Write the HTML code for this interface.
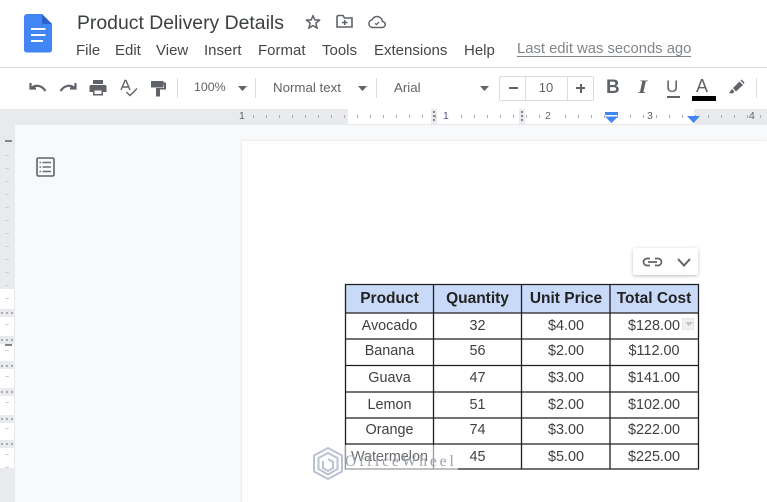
<!DOCTYPE html>
<html><head><meta charset="utf-8">
<style>
html,body{margin:0;padding:0;background:#fff}
#p{position:relative;width:767px;height:502px;overflow:hidden;background:#fff;font-family:"Liberation Sans",sans-serif;color:#3c4043;filter:blur(.35px)}
.a{position:absolute;white-space:nowrap}
.m{top:42px;font-size:15px;line-height:17px;color:#444746}
.t{top:80px;font-size:13.300px;line-height:15px;color:#5f6368}
.sep{position:absolute;top:78px;width:1px;height:20px;background:#dadce0}
.c{position:absolute;text-align:center;font-size:14.400px;line-height:16px;color:#3f3f3f;white-space:nowrap}
.h{font-weight:bold;font-size:15.500px;color:#222}
.n{position:absolute;top:111px;font-size:10.500px;line-height:11px;color:#5f6368}
.d{position:absolute;left:1px;width:12px;height:2px;background:repeating-linear-gradient(90deg,#a8abaf 0 2px,transparent 2px 5px)}
.g{position:absolute;left:0;width:14px;height:8px;background:#e8eaed}
svg{position:absolute;overflow:visible}
</style></head><body><div id="p">

<svg style="left:24px;top:14px" width="28" height="39" viewBox="0 0 28 39">
<path d="M3 0H18L28 10V36a2.500 2.500 0 0 1-2.500 2.500H2.500A2.500 2.500 0 0 1 0 36V3A3 3 0 0 1 3 0Z" fill="#4285f4"/>
<path d="M18 0L28 10H20a2 2 0 0 1-2-2Z" fill="#2a62c9"/>
<path d="M7 15H21.500M7 21H21.500M7 27H19" stroke="#fff" stroke-width="2" fill="none"/>
</svg>
<div class="a" style="left:77px;top:12px;font-size:19.400px;line-height:23px;color:#3c4043">Product Delivery Details</div>
<svg style="left:305px;top:14px" width="16" height="16" viewBox="0 0 16 16"><path d="M8 1.500L9.800 6H14.700L10.800 9.200L12.200 14.300L8 11.500L3.800 14.300L5.200 9.200L1.300 6H6.200Z" fill="none" stroke="#5f6368" stroke-width="1.500" stroke-linejoin="round"/></svg>
<svg style="left:336px;top:14px" width="18" height="15" viewBox="0 0 18 15"><path d="M1 2.500V13H16V4H8.500L7 1.500H2Z" fill="none" stroke="#5f6368" stroke-width="1.600"/><path d="M6 8.500H11.500M8.700 6V11" stroke="#5f6368" stroke-width="1.500"/></svg>
<svg style="left:368px;top:15px" width="18" height="14" viewBox="0 0 18 14"><path d="M4.500 12.500H14a3 3 0 0 0 .5-6A5.500 5.500 0 0 0 4 4.800 3.900 3.900 0 0 0 4.500 12.500Z" fill="none" stroke="#5f6368" stroke-width="1.500"/><path d="M7 8.500L8.500 9.500L11 7" fill="none" stroke="#5f6368" stroke-width="1.300"/></svg>

<div class="a m" style="left:76px">File</div>
<div class="a m" style="left:115px">Edit</div>
<div class="a m" style="left:156px">View</div>
<div class="a m" style="left:204px">Insert</div>
<div class="a m" style="left:258px">Format</div>
<div class="a m" style="left:322px">Tools</div>
<div class="a m" style="left:374px">Extensions</div>
<div class="a m" style="left:464px">Help</div>
<div class="a" style="left:517px;top:42px;font-size:14.800px;line-height:14px;color:#80868b;border-bottom:1px solid #80868b">Last edit was seconds ago</div>

<div class="a" style="left:0;top:67px;width:767px;height:1px;background:#dadce0"></div>

<svg style="left:29px;top:82px" width="18" height="12" viewBox="0 0 18 12"><path d="M1.500 1V6.500H7M2 6.500C6 2.500 12 2.500 16.500 9" fill="none" stroke="#5f6368" stroke-width="2.200"/></svg>
<svg style="left:59px;top:82px" width="18" height="12" viewBox="0 0 18 12"><path d="M16.500 1V6.500H11M16 6.500C12 2.500 6 2.500 1.500 9" fill="none" stroke="#5f6368" stroke-width="2.200"/></svg>
<svg style="left:89px;top:80px" width="18" height="16" viewBox="0 0 18 16"><path d="M4 0H14V4H4ZM2 5H16a1.500 1.500 0 0 1 1.500 1.500V12H14V15.500H4V12H.5V6.500A1.500 1.500 0 0 1 2 5Z" fill="#5f6368"/><path d="M5.500 10.500H12.500V14H5.500Z" fill="#fff"/></svg>
<svg style="left:120px;top:79px" width="18" height="18" viewBox="0 0 18 18"><path d="M1 11L5 1.500H6L10 11M2.500 8H8.500" fill="none" stroke="#5f6368" stroke-width="1.400"/><path d="M6.500 13L10 16.500L17 9.500" fill="none" stroke="#5f6368" stroke-width="1.400"/></svg>
<svg style="left:151px;top:80px" width="15" height="17" viewBox="0 0 15 17"><path d="M0 1H12.500V7.500H0ZM12.500 2.500H15V9.500H9V16.500H5V8H13V4.500H12.500Z" fill="#5f6368"/></svg>
<div class="sep" style="left:177px"></div>
<div class="a t" style="left:194px;font-size:12.400px">100%</div>
<svg style="left:238px;top:86px" width="9" height="5"><path d="M0 0H9L4.500 5Z" fill="#5f6368"/></svg>
<div class="sep" style="left:255px"></div>
<div class="a t" style="left:273px">Normal text</div>
<svg style="left:358px;top:86px" width="9" height="5"><path d="M0 0H9L4.500 5Z" fill="#5f6368"/></svg>
<div class="sep" style="left:376px"></div>
<div class="a t" style="left:394px">Arial</div>
<svg style="left:480px;top:86px" width="9" height="5"><path d="M0 0H9L4.500 5Z" fill="#5f6368"/></svg>

<div class="a" style="left:499px;top:76px;width:93px;height:23px;border:1px solid #dadce0;border-radius:2px;box-sizing:content-box"></div>
<div class="a" style="left:525px;top:77px;width:1px;height:23px;background:#dadce0"></div>
<div class="a" style="left:567px;top:77px;width:1px;height:23px;background:#dadce0"></div>
<div class="a" style="left:509px;top:87px;width:9px;height:2px;background:#5f6368"></div>
<div class="a" style="left:525px;top:80px;width:42px;text-align:center;font-size:13px;line-height:16px;color:#5f6368">10</div>
<div class="a" style="left:576px;top:87px;width:9px;height:2px;background:#5f6368"></div>
<div class="a" style="left:579.500px;top:83.500px;width:2px;height:9px;background:#5f6368"></div>

<div class="a" style="left:606px;top:77px;font-size:19px;line-height:22px;font-weight:bold;color:#5f6368">B</div>
<div class="a" style="left:638px;top:77px;font-size:19px;line-height:22px;font-style:italic;font-family:'Liberation Serif',serif;font-weight:bold;color:#5f6368;transform:scaleX(1.250);transform-origin:left">I</div>
<div class="a" style="left:666px;top:78px;font-size:17px;line-height:18px;color:#5f6368">U</div>
<div class="a" style="left:667px;top:96px;width:13px;height:2px;background:#5f6368"></div>
<div class="a" style="left:696px;top:77px;font-size:18px;line-height:19px;color:#5f6368">A</div>
<div class="a" style="left:692px;top:96px;width:24px;height:5px;background:#000"></div>
<svg style="left:729px;top:79px" width="16" height="15" viewBox="0 0 16 15"><path d="M0 14L3 10L5.500 12.500L3.500 14.500ZM4 9L10.500 2.500L14 6L7 12.500ZM11.500 1.500L12.500 .5L15.500 3.500L14.800 5Z" fill="#5f6368"/></svg>
<div class="sep" style="left:756px"></div>

<!-- ruler -->
<div class="a" style="left:0;top:109px;width:767px;height:16px;background:#e8eaed"></div>
<div class="a" style="left:348px;top:109px;width:346px;height:15px;background:#fff"></div>
<div class="a" style="left:431px;top:109px;width:6px;height:15px;background:#e8eaed"></div>
<div class="a" style="left:519px;top:109px;width:6px;height:15px;background:#e8eaed"></div>
<div class="a" style="left:432.500px;top:111px;width:2px;height:11px;background:repeating-linear-gradient(#80868b 0 2px,transparent 2px 4px)"></div>
<div class="a" style="left:521px;top:111px;width:2px;height:11px;background:repeating-linear-gradient(#80868b 0 2px,transparent 2px 4px)"></div>
<div class="a" style="left:240px;top:115px;width:527px;height:3px;background:repeating-linear-gradient(90deg,#aaadb2 0 1px,transparent 1px 13px)"></div>
<div class="a" style="left:237px;top:112px;width:8px;height:11px;background:#e8eaed"></div>
<div class="n" style="left:239px">1</div>
<div class="a" style="left:441px;top:112px;width:9px;height:11px;background:#fff"></div>
<div class="n" style="left:443px;color:#5b4a8a">1</div>
<div class="a" style="left:544px;top:112px;width:9px;height:11px;background:#fff"></div>
<div class="n" style="left:545px">2</div>
<div class="a" style="left:645px;top:112px;width:9px;height:11px;background:#fff"></div>
<div class="n" style="left:647px">3</div>
<div class="a" style="left:748px;top:112px;width:9px;height:11px;background:#e8eaed"></div>
<div class="n" style="left:749px">4</div>
<svg style="left:605px;top:112px" width="13" height="11" viewBox="0 0 13 11"><path d="M0 0H13V3H0ZM0 4.500H13L6.500 11Z" fill="#4285f4"/></svg>
<svg style="left:687px;top:116px" width="13" height="7" viewBox="0 0 13 7"><path d="M0 0H13L6.500 7Z" fill="#4285f4"/></svg>

<!-- canvas -->
<div class="a" style="left:15px;top:125px;width:752px;height:377px;background:#f8f9fa"></div>
<div class="a" style="left:0;top:125px;width:15px;height:377px;background:#e8eaed"></div>
<div class="a" style="left:0;top:289px;width:14px;height:179px;background:#fff"></div>
<div class="a" style="left:5px;top:140px;width:7px;height:2px;background:#80868b"></div>
<div class="a" style="left:5px;top:344px;width:7px;height:2px;background:#80868b"></div>
<div class="a" style="left:5px;top:155px;width:4px;height:322px;background:repeating-linear-gradient(#cdd0d4 0 1px,transparent 1px 13px)"></div>
<div class="g" style="top:309px"></div>
<div class="g" style="top:336px"></div>
<div class="g" style="top:361px"></div>
<div class="g" style="top:388px"></div>
<div class="g" style="top:415px"></div>
<div class="g" style="top:440px"></div>
<div class="d" style="top:312px"></div>
<div class="d" style="top:339px"></div>
<div class="d" style="top:365px"></div>
<div class="d" style="top:391px"></div>
<div class="d" style="top:418px"></div>
<div class="d" style="top:443px"></div>

<svg style="left:36px;top:157px" width="19" height="20" viewBox="0 0 19 20"><rect x="1" y="1" width="17" height="18" rx="1.500" fill="none" stroke="#5f6368" stroke-width="1.600"/><path d="M6.500 5.500H15M6.500 10H15M6.500 14.500H15M3.500 5.500H5M3.500 10H5M3.500 14.500H5" stroke="#6d7175" stroke-width="1.500"/></svg>

<div class="a" style="left:242px;top:141px;width:525px;height:361px;background:#fff;box-shadow:0 0 2px rgba(60,64,67,.2)"></div>

<!-- link chip -->
<div class="a" style="left:633px;top:248px;width:65px;height:27px;background:#fff;box-shadow:0 1px 3px rgba(60,64,67,.35);border-radius:2px"></div>
<svg style="left:642px;top:257px" width="21" height="10" viewBox="0 0 21 10"><path d="M8 1.500H5a3.500 3.500 0 0 0 0 7H8M13 1.500H16a3.500 3.500 0 0 1 0 7H13M6 5H15" fill="none" stroke="#5f6368" stroke-width="1.700"/></svg>
<svg style="left:677px;top:258px" width="14" height="9" viewBox="0 0 14 9"><path d="M1 1L7 7.500L13 1" fill="none" stroke="#5f6368" stroke-width="2"/></svg>

<!-- table -->
<div class="a" style="left:346px;top:285px;width:352px;height:28px;background:#c9daf8"></div>
<svg style="left:0;top:0" width="767" height="502" viewBox="0 0 767 502">
<path d="M345.500 284.500H698.500V469H345.500ZM433.500 284.500V469M521.500 284.500V469M610 284.500V469M345.500 313H698.500M345.500 339H698.500M345.500 365.500H698.500M345.500 392H698.500M345.500 418H698.500M345.500 444H698.500" fill="none" stroke="#1f1f1f" stroke-width="1.300"/>
</svg>
<div class="c h" style="left:346px;top:291px;width:87px">Product</div>
<div class="c h" style="left:434px;top:291px;width:87px">Quantity</div>
<div class="c h" style="left:522px;top:291px;width:88px">Unit Price</div>
<div class="c h" style="left:610px;top:291px;width:88px">Total Cost</div>

<div class="c" style="left:346px;top:318px;width:87px">Avocado</div>
<div class="c" style="left:434px;top:318px;width:87px">32</div>
<div class="c" style="left:522px;top:318px;width:88px">$4.00</div>
<div class="c" style="left:610px;top:318px;width:88px">$128.00</div>
<div class="a" style="left:682px;top:318px;width:12px;height:12px;background:#f1f1f1;border:1px solid #e6e6e6;box-sizing:border-box"></div>
<svg style="left:684.500px;top:322px" width="8" height="4"><path d="M0 0H8L4 4Z" fill="#c4c4c4"/></svg>

<div class="c" style="left:346px;top:343px;width:87px">Banana</div>
<div class="c" style="left:434px;top:343px;width:87px">56</div>
<div class="c" style="left:522px;top:343px;width:88px">$2.00</div>
<div class="c" style="left:610px;top:343px;width:88px">$112.00</div>

<div class="c" style="left:346px;top:370px;width:87px">Guava</div>
<div class="c" style="left:434px;top:370px;width:87px">47</div>
<div class="c" style="left:522px;top:370px;width:88px">$3.00</div>
<div class="c" style="left:610px;top:370px;width:88px">$141.00</div>

<div class="c" style="left:346px;top:397px;width:87px">Lemon</div>
<div class="c" style="left:434px;top:397px;width:87px">51</div>
<div class="c" style="left:522px;top:397px;width:88px">$2.00</div>
<div class="c" style="left:610px;top:397px;width:88px">$102.00</div>

<div class="c" style="left:346px;top:422px;width:87px">Orange</div>
<div class="c" style="left:434px;top:422px;width:87px">74</div>
<div class="c" style="left:522px;top:422px;width:88px">$3.00</div>
<div class="c" style="left:610px;top:422px;width:88px">$222.00</div>

<div class="c" style="left:434px;top:449px;width:87px">45</div>
<div class="c" style="left:522px;top:449px;width:88px">$5.00</div>
<div class="c" style="left:610px;top:449px;width:88px">$225.00</div>

<!-- watermark -->
<div class="a" style="left:345px;top:445px;width:113px;height:26px;background:rgba(255,255,255,.55)"></div>
<div class="c" style="left:346px;top:449px;width:87px;color:#6a6a6a">Watermelon</div>
<svg style="left:313px;top:447px" width="30" height="33" viewBox="0 0 30 33"><path d="M15 1L29 8.500V24.500L15 32L1 24.500V8.500Z" fill="rgba(255,255,255,.6)" stroke="#bcc2d2" stroke-width="2"/><path d="M15 6L24.500 11V22L15 27.500L5.500 22V11Z" fill="none" stroke="#bcc2d2" stroke-width="2"/><path d="M10 14V21L15 24L20 21V15L15 12" fill="none" stroke="#bcc2d2" stroke-width="2"/></svg>
<div class="a" style="left:345px;top:453px;font-family:'Liberation Serif',serif;font-size:15.500px;line-height:18px;letter-spacing:2.900px;color:#99a0ae">OfficeWheel</div>

</div></body></html>
